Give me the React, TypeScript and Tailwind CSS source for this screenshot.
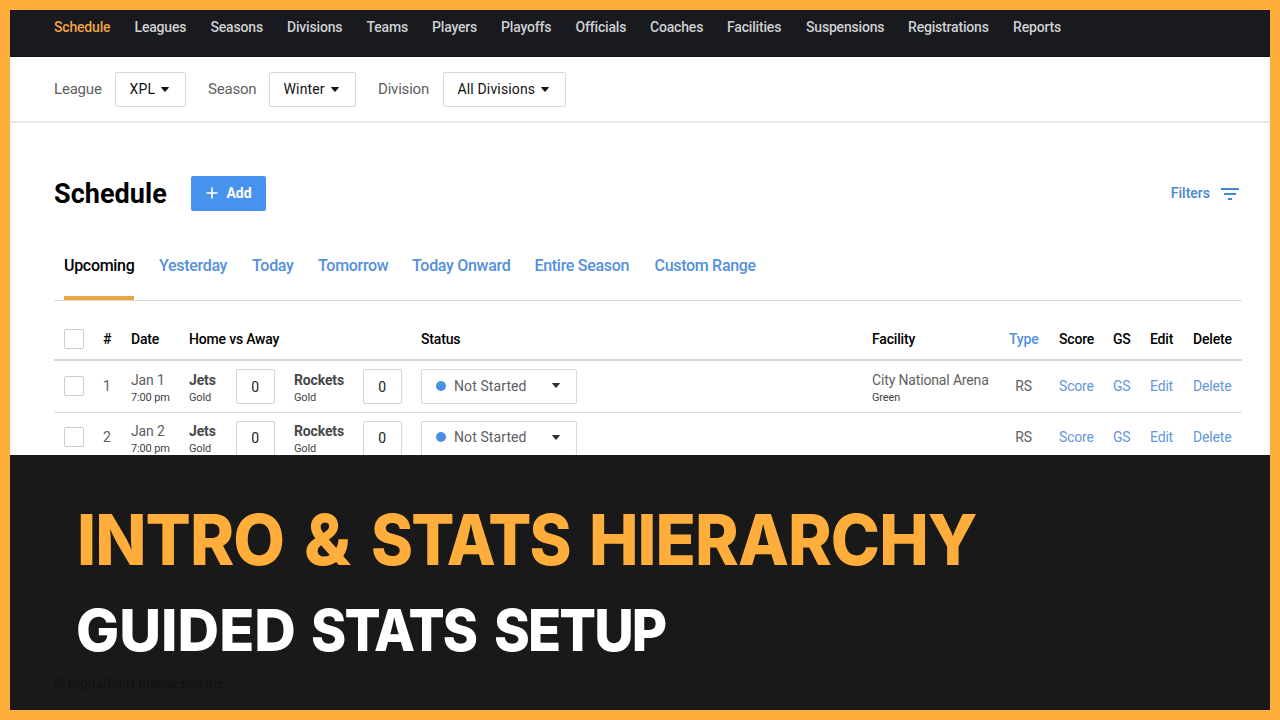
import React from 'react';

const navItems = [
  { label: 'Schedule', width: 'w-[80.5px]' },
  { label: 'Leagues', width: 'w-[76px]' },
  { label: 'Seasons', width: 'w-[76.5px]' },
  { label: 'Divisions', width: 'w-[79.5px]' },
  { label: 'Teams', width: 'w-[65.5px]' },
  { label: 'Players', width: 'w-[69px]' },
  { label: 'Playoffs', width: 'w-[74.5px]' },
  { label: 'Officials', width: 'w-[74.5px]' },
  { label: 'Coaches', width: 'w-[77px]' },
  { label: 'Facilities', width: 'w-[79px]' },
  { label: 'Suspensions', width: 'w-[102px]' },
  { label: 'Registrations', width: 'w-[105px]' },
  { label: 'Reports', width: 'w-[60px]' },
];

const filters = [
  { label: 'League', value: 'XPL', labelWidth: 'w-[61px]', boxWidth: 'w-[71px]' },
  { label: 'Season', value: 'Winter', labelWidth: 'w-[61px]', boxWidth: 'w-[87px]' },
  { label: 'Division', value: 'All Divisions', labelWidth: 'w-[65px]', boxWidth: 'w-[123px]' },
];

const tabs = [
  { label: 'Yesterday', width: 'w-[93px]' },
  { label: 'Today', width: 'w-[66px]' },
  { label: 'Tomorrow', width: 'w-[94px]' },
  { label: 'Today Onward', width: 'w-[122.5px]' },
  { label: 'Entire Season', width: 'w-[120px]' },
  { label: 'Custom Range', width: 'w-[110px]' },
];

const games = [
  { id: 1, date: 'Jan 1', time: '7:00 pm', facility: 'City National Arena', rink: 'Green', height: 'h-[52px]' },
  { id: 2, date: 'Jan 2', time: '7:00 pm', facility: '', rink: '', height: 'h-[51px]' },
];

// Banner words are condensed one by one
const titleWords = [
  { text: 'INTRO', style: 'w-[227px] scale-x-[0.957] tracking-[-1px]' },
  { text: '&', style: 'w-[67px] scale-x-[0.98]' },
  { text: 'STATS', style: 'w-[218px] scale-x-[0.91] tracking-[-2px]' },
  { text: 'HIERARCHY', style: 'w-[400px] scale-x-[0.946] tracking-[-1px]' },
];

const subtitleWords = [
  { text: 'GUIDED', style: 'w-[235px] scale-x-[0.992]' },
  { text: 'STATS', style: 'w-[183px] scale-x-[0.922] tracking-[-2px]' },
  { text: 'SETUP', style: 'w-[200px] scale-x-[0.937] tracking-[-2px]' },
];

const columns =
  'grid grid-cols-[39px_28px_58px_47px_58px_69px_58px_451px_137px_50px_54px_37px_43px_39px] items-center pl-[10px]';

const Caret: React.FC<{ className?: string }> = ({ className = '' }) => (
  <svg viewBox="0 0 8 5" className={`h-[5px] w-2 fill-current ${className}`}>
    <path d="M0.4 0h7.2q.4.3.1.7L4.5 4.5q-.5.5-1 0L.3.7Q0 .3.4 0z" />
  </svg>
);

const Checkbox = () => <span className="h-5 w-5 rounded-[2px] border border-[#ccc] bg-white" />;

const Stacked: React.FC<{ top: string; bottom: string; bold?: boolean }> = ({ top, bottom, bold = false }) => (
  <div className="whitespace-nowrap pt-0.5">
    <div className={`text-sm leading-[18px] tracking-[-0.15px] ${bold ? 'font-bold text-[#484848]' : 'text-[#606060]'}`}>
      {top}
    </div>
    <div className="h-4 text-[11px] leading-[17px] tracking-[-0.15px] text-[#444]">{bottom}</div>
  </div>
);

const ScoreBox = () => (
  <div className="flex h-[35px] w-[39px] items-center justify-center rounded-[2px] border border-[#d4d4d4] pr-px text-sm text-[#222]">
    0
  </div>
);

const App = () => {
  return (
    <div className="h-[720px] w-[1280px] overflow-hidden border-[10px] border-[#ffae3b] bg-white font-['Roboto',sans-serif]">
      <div className="h-[445px] overflow-hidden">
        {/* Main navigation */}
        <nav className="flex h-[47px] border-b border-[#101216] bg-[#181a20] pl-11 pt-[7px] text-sm font-medium leading-5 tracking-[-0.18px] text-[#cfd0d1]">
          {navItems.map((item, index) => (
            <a key={item.label} className={`shrink-0 whitespace-nowrap ${item.width} ${index === 0 ? 'text-[#f2a541]' : ''}`}>
              {item.label}
            </a>
          ))}
        </nav>

        {/* League / season / division pickers */}
        <div className="flex h-[66px] items-center gap-[22px] border-b-2 border-[#e8e8e8] pl-11">
          {filters.map((filter) => (
            <div key={filter.label} className="flex items-center">
              <span className={`text-[15px] tracking-[-0.2px] text-[#606060] ${filter.labelWidth}`}>{filter.label}</span>
              <button
                className={`flex h-[35px] items-center gap-1.5 whitespace-nowrap rounded-[2px] border border-[#d9d9d9] pl-[13.5px] text-sm tracking-[0.15px] text-[#111] ${filter.boxWidth}`}
              >
                {filter.value}
                <Caret />
              </button>
            </div>
          ))}
        </div>

        <main className="pl-11 pr-7">
          {/* Page heading */}
          <header className="mt-[53px] flex h-[35px] items-center">
            <h1 className="w-[137.4px] pt-0.5 text-[27px] font-bold tracking-[0.05px] text-black">Schedule</h1>
            <button className="flex h-[35px] w-[75px] items-center rounded-[2px] bg-[#4892ef] pb-0.5 pl-[15px] text-sm font-bold text-white">
              <svg viewBox="0 0 12 12" className="mr-2 h-3 w-3 stroke-current" strokeWidth="1.7">
                <path d="M6 .5v11M.5 6h11" />
              </svg>
              Add
            </button>
            <div className="ml-auto mr-[3px] flex items-center gap-[11px] pb-0.5 text-sm font-medium text-[#4485d4]">
              Filters
              <svg viewBox="0 0 18 12" className="mt-0.5 h-3 w-[18px] stroke-current" strokeWidth="1.8">
                <path d="M0 1h18M3 6h12M7 11h4" />
              </svg>
            </div>
          </header>

          {/* Date range tabs */}
          <div className="mt-[30px] flex h-[60px] border-b border-[#d9d9d9] pl-[10px] text-base font-medium tracking-[-0.3px] text-[#5490dc]">
            <div className="mr-[25px] flex w-[70px] shrink-0 flex-col justify-between whitespace-nowrap text-black">
              <span className="pt-[13px] leading-6">Upcoming</span>
              <span className="h-1 bg-[#eda63f]" />
            </div>
            {tabs.map((tab) => (
              <a key={tab.label} className={`shrink-0 whitespace-nowrap pt-[13px] leading-6 ${tab.width}`}>
                {tab.label}
              </a>
            ))}
          </div>

          {/* Games table */}
          <div
            className={`${columns} mt-[17px] h-[43px] whitespace-nowrap border-b-2 border-[#d8d8d8] text-sm font-medium tracking-[-0.18px] text-black`}
          >
            <Checkbox />
            <span>#</span>
            <span>Date</span>
            <span className="col-span-4">Home vs Away</span>
            <span>Status</span>
            <span>Facility</span>
            <span className="text-[#5490dc]">Type</span>
            <span>Score</span>
            <span>GS</span>
            <span>Edit</span>
            <span>Delete</span>
          </div>
          {games.map((game) => (
            <div
              key={game.id}
              className={`${columns} ${game.height} border-b border-[#dcdcdc] text-sm tracking-[-0.17px] text-[#6497dd]`}
            >
              <div className="flex pb-0.5">
                <Checkbox />
              </div>
              <span className="pb-0.5 text-[#606060]">{game.id}</span>
              <Stacked top={game.date} bottom={game.time} />
              <Stacked top="Jets" bottom="Gold" bold />
              <ScoreBox />
              <Stacked top="Rockets" bottom="Gold" bold />
              <ScoreBox />
              <div className="flex h-[35px] w-[156px] items-center rounded-[2px] border border-[#d9d9d9] pb-0.5 pl-3.5 tracking-[0.1px] text-[#606060]">
                <span className="mr-2 h-2.5 w-2.5 rounded-full bg-[#4a8fe3]" />
                Not Started
                <Caret className="ml-auto mr-4 text-[#333]" />
              </div>
              <Stacked top={game.facility} bottom={game.rink} />
              <span className="w-[29px] pb-0.5 text-center text-[#606060]">RS</span>
              <a className="pb-0.5">Score</a>
              <a className="pb-0.5">GS</a>
              <a className="pb-0.5">Edit</a>
              <a className="pb-0.5">Delete</a>
            </div>
          ))}
        </main>
      </div>

      {/* Title banner */}
      <section className="flex h-[255px] flex-col bg-[#191919] font-['Inter',sans-serif] font-extrabold">
        <h2 className="mt-[50px] flex h-[70px] pl-[67px] text-[70px] leading-[70px] text-[#ffae3b]">
          {titleWords.map((word) => (
            <span key={word.text} className={`shrink-0 origin-left whitespace-nowrap ${word.style}`}>
              {word.text}{' '}
            </span>
          ))}
        </h2>
        <p className="mt-[26px] flex h-[58px] pl-[66px] text-[58px] leading-[58px] text-white">
          {subtitleWords.map((word) => (
            <span key={word.text} className={`shrink-0 origin-left whitespace-nowrap ${word.style}`}>
              {word.text}{' '}
            </span>
          ))}
        </p>
        <footer className="mt-[15px] pl-11 font-['Roboto',sans-serif] text-[13px] font-normal leading-5 tracking-[0.3px] text-[#101010]">
          © DigitalShift Interactive Inc
        </footer>
      </section>
    </div>
  );
};

export default App;
